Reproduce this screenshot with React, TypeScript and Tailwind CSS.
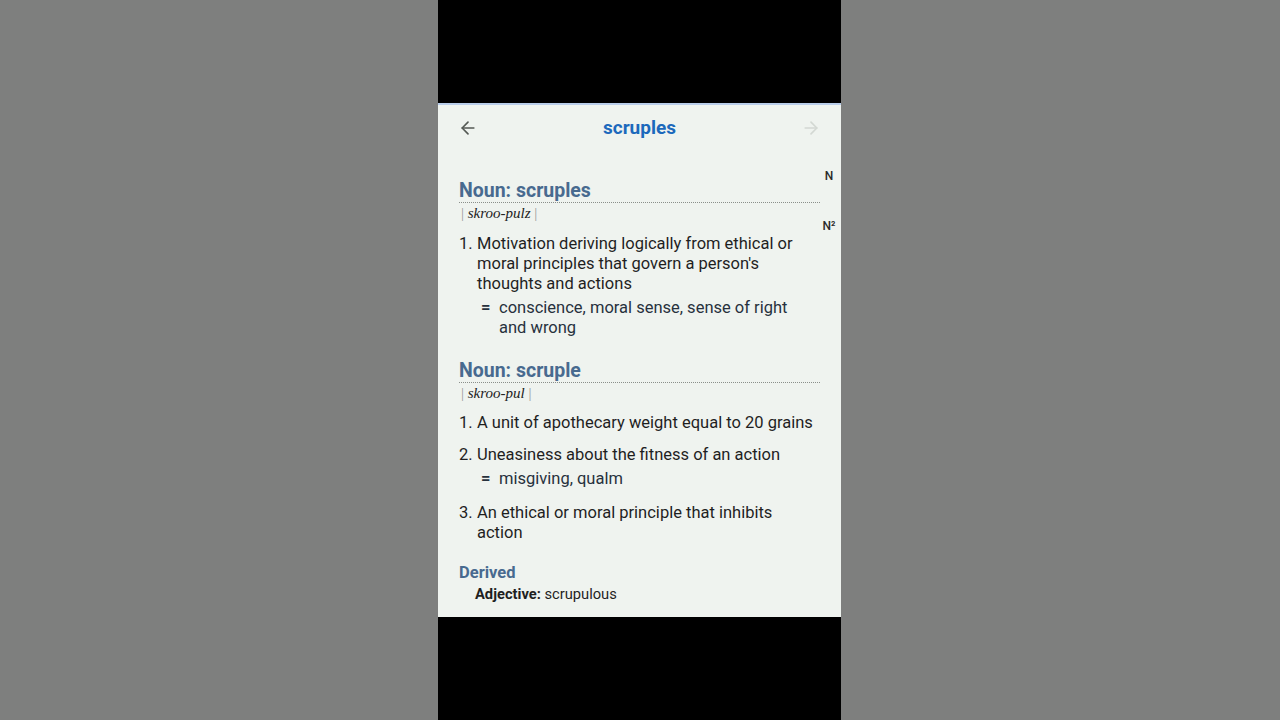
import React from 'react';
import { ArrowLeft, ArrowRight } from 'lucide-react';

type Sense = { text: string; syn?: string };

const Heading = ({ title, pron }: { title: string; pron: string }) => (
  <div>
    <div className="text-[19.5px] leading-[22px] font-bold text-[#486a8f] border-b border-dotted border-[#8a8f8a] pt-[1px]">
      {title}
    </div>
    <div className="mt-[2px] pl-[2px] text-[15px] leading-[16px] text-[#222] font-['Liberation_Serif',serif]">
      <span className="text-[#9a9a9a]">|</span> <i>{pron}</i> <span className="text-[#9a9a9a]">|</span>
    </div>
  </div>
);

const SenseList = ({ senses, top = 12 }: { senses: Sense[]; top?: number }) => (
  <ol className={`${top === 13 ? 'mt-[13px]' : 'mt-[12px]'} flex flex-col gap-[12px]`}>
    {senses.map((s, i) => (
      <li key={i} className="flex text-[16.5px] leading-[20px] text-[#1f1f1f]">
        <span className="w-[18px] shrink-0">{i + 1}.</span>
        <div className="flex-1">
          <div>{s.text}</div>
          {s.syn && (
            <div className="flex mt-[4px] mb-[2px] pr-[20px] text-[#27313d]">
              <span className="w-[22px] shrink-0 pl-[4px] font-bold">=</span>
              <span className="flex-1">{s.syn}</span>
            </div>
          )}
        </div>
      </li>
    ))}
  </ol>
);

export default function App() {
  return (
    <div className="w-[1280px] h-[720px] bg-[#7e7f7e] flex pl-[438px] font-['Roboto',sans-serif]">
      <div className="w-[403px] h-full bg-black flex flex-col">
        <div className="h-[103px]" />
        <div className="h-[2px] bg-[#b9cdea]" />
        <div className="h-[512px] bg-[#eff3ef] flex flex-col">
          {/* header */}
          <div className="h-[45px] flex items-center justify-between px-[20px] pt-[1px]">
            <ArrowLeft size={20} strokeWidth={2} className="text-[#555a55]" />
            <span className="text-[19px] font-bold text-[#1c69bc]">scruples</span>
            <ArrowRight size={20} strokeWidth={2} className="text-[#d3d8d3]" />
          </div>

          <div className="flex flex-1">
            <div className="w-[382px] pl-[21px] pt-[29px]">
              <Heading title="Noun: scruples" pron="skroo-pulz" />
              <SenseList
                top={13}
                senses={[
                  {
                    text: "Motivation deriving logically from ethical or moral principles that govern a person's thoughts and actions",
                    syn: 'conscience, moral sense, sense of right and wrong',
                  },
                ]}
              />

              <div className="mt-[19px]">
                <Heading title="Noun: scruple" pron="skroo-pul" />
              </div>
              <SenseList
                senses={[
                  { text: 'A unit of apothecary weight equal to 20 grains' },
                  { text: 'Uneasiness about the fitness of an action', syn: 'misgiving, qualm' },
                  { text: 'An ethical or moral principle that inhibits action' },
                ]}
              />

              <div className="mt-[19px] text-[16.5px] leading-[22px] font-bold text-[#486a8f]">Derived</div>
              <div className="mt-[1px] pl-[16px] text-[14.7px] leading-[18px] text-[#1f1f1f]">
                <span className="font-bold">Adjective:</span> scrupulous
              </div>
            </div>

            {/* index column */}
            <div className="flex-1 flex flex-col items-center pr-[3px] pt-[19px] text-[12px] leading-[14px] text-[#2a2a2a] font-medium">
              <span>N</span>
              <span className="mt-[36px]">N²</span>
            </div>
          </div>
        </div>
      </div>
    </div>
  );
}
